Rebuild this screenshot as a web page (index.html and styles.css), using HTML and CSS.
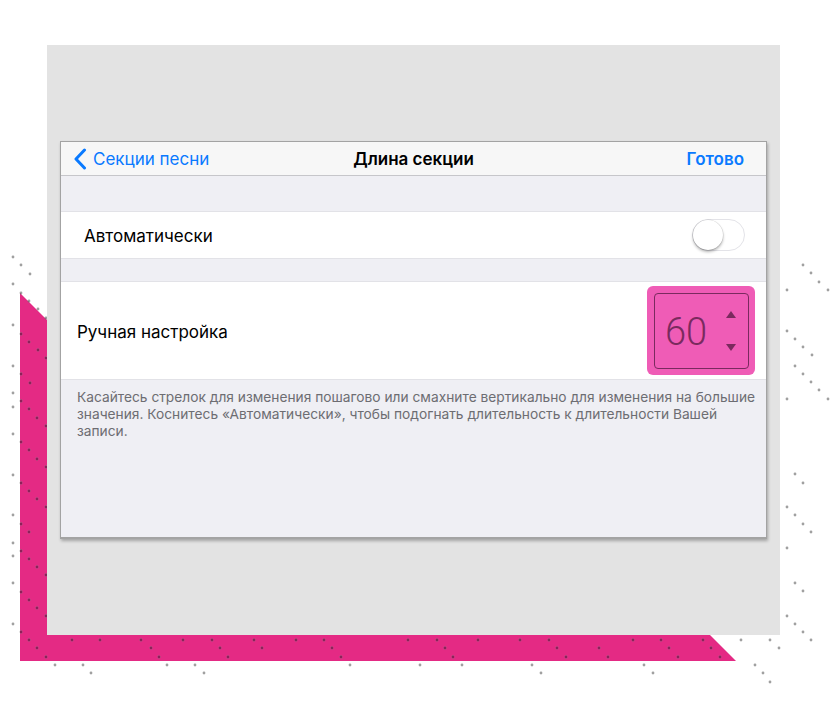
FILE: index.html
```html
<!DOCTYPE html>
<html lang="ru">
<head>
  <meta charset="UTF-8" />
  <title>Длина секции</title>
  <link rel="stylesheet" href="styles.css">
</head>
<body>
  <div class="stage">
    <!-- Pink corner frame with dotted texture behind the board -->
    <svg class="deco" width="840" height="710" viewBox="0 0 840 710">
      <defs>
        <clipPath id="frame-clip">
          <polygon points="20,293 47,320 47,600 710,635 736,661 20,661" />
        </clipPath>
        <g id="dots">
          <circle cx="13" cy="257" r="1.4"/><circle cx="21" cy="265" r="1.4"/><circle cx="30" cy="274" r="1.4"/>
          <circle cx="13" cy="284" r="1.4"/><circle cx="21" cy="293" r="1.4"/><circle cx="29" cy="301" r="1.4"/><circle cx="38" cy="309" r="1.4"/><circle cx="46" cy="318" r="1.4"/>
          <circle cx="13" cy="325" r="1.4"/><circle cx="21" cy="334" r="1.4"/><circle cx="29" cy="342" r="1.4"/><circle cx="38" cy="350" r="1.4"/><circle cx="46" cy="358" r="1.4"/>
          <circle cx="13" cy="366" r="1.4"/><circle cx="21" cy="374" r="1.4"/><circle cx="30" cy="383" r="1.4"/>
          <circle cx="13" cy="393" r="1.4"/><circle cx="21" cy="401" r="1.4"/><circle cx="29" cy="409" r="1.4"/><circle cx="37" cy="418" r="1.4"/><circle cx="46" cy="426" r="1.4"/>
          <circle cx="13" cy="407" r="1.4"/>
          <circle cx="13" cy="434" r="1.4"/><circle cx="21" cy="442" r="1.4"/><circle cx="29" cy="450" r="1.4"/><circle cx="37" cy="459" r="1.4"/><circle cx="46" cy="467" r="1.4"/>
          <circle cx="13" cy="475" r="1.4"/><circle cx="21" cy="483" r="1.4"/><circle cx="29" cy="491" r="1.4"/><circle cx="37" cy="499" r="1.4"/><circle cx="46" cy="507" r="1.4"/>
          <circle cx="13" cy="515" r="1.4"/><circle cx="21" cy="524" r="1.4"/><circle cx="29" cy="532" r="1.4"/>
          <circle cx="13" cy="543" r="1.4"/><circle cx="21" cy="551" r="1.4"/><circle cx="29" cy="559" r="1.4"/><circle cx="37" cy="567" r="1.4"/><circle cx="46" cy="575" r="1.4"/>
          <circle cx="13" cy="556" r="1.4"/>
          <circle cx="13" cy="583" r="1.4"/><circle cx="21" cy="592" r="1.4"/><circle cx="29" cy="600" r="1.4"/><circle cx="37" cy="608" r="1.4"/><circle cx="46" cy="616" r="1.4"/>
          <circle cx="13" cy="624" r="1.4"/><circle cx="21" cy="632" r="1.4"/><circle cx="29" cy="640" r="1.4"/><circle cx="37" cy="648" r="1.4"/><circle cx="46" cy="657" r="1.4"/><circle cx="55" cy="665" r="1.4"/>
          <!-- bottom band -->
          <circle cx="72" cy="640" r="1.4"/><circle cx="100" cy="640" r="1.4"/><circle cx="141" cy="640" r="1.4"/><circle cx="183" cy="640" r="1.4"/><circle cx="212" cy="640" r="1.4"/><circle cx="254" cy="640" r="1.4"/><circle cx="296" cy="640" r="1.4"/><circle cx="324" cy="640" r="1.4"/><circle cx="408" cy="640" r="1.4"/><circle cx="437" cy="640" r="1.4"/><circle cx="478" cy="640" r="1.4"/><circle cx="520" cy="640" r="1.4"/><circle cx="549" cy="640" r="1.4"/><circle cx="633" cy="640" r="1.4"/><circle cx="661" cy="640" r="1.4"/><circle cx="703" cy="640" r="1.4"/><circle cx="741" cy="640" r="1.4"/><circle cx="770" cy="640" r="1.4"/>
          <circle cx="151" cy="648" r="1.4"/><circle cx="220" cy="648" r="1.4"/><circle cx="262" cy="648" r="1.4"/><circle cx="332" cy="648" r="1.4"/><circle cx="445" cy="648" r="1.4"/><circle cx="557" cy="648" r="1.4"/><circle cx="599" cy="648" r="1.4"/><circle cx="669" cy="648" r="1.4"/><circle cx="711" cy="648" r="1.4"/><circle cx="779" cy="648" r="1.4"/>
          <circle cx="159" cy="657" r="1.4"/><circle cx="228" cy="657" r="1.4"/><circle cx="341" cy="657" r="1.4"/><circle cx="453" cy="657" r="1.4"/><circle cx="566" cy="657" r="1.4"/><circle cx="608" cy="657" r="1.4"/><circle cx="678" cy="657" r="1.4"/><circle cx="720" cy="657" r="1.4"/>
          <circle cx="83" cy="665" r="1.4"/><circle cx="167" cy="665" r="1.4"/><circle cx="195" cy="665" r="1.4"/><circle cx="350" cy="665" r="1.4"/><circle cx="420" cy="665" r="1.4"/><circle cx="462" cy="665" r="1.4"/><circle cx="532" cy="665" r="1.4"/><circle cx="644" cy="665" r="1.4"/><circle cx="755" cy="665" r="1.4"/>
          <circle cx="91" cy="673" r="1.4"/><circle cx="204" cy="673" r="1.4"/><circle cx="541" cy="673" r="1.4"/><circle cx="653" cy="673" r="1.4"/><circle cx="763" cy="673" r="1.4"/>
          <circle cx="770" cy="682" r="1.4"/>
          <!-- right side -->
          <circle cx="803" cy="265" r="1.4"/><circle cx="811" cy="273" r="1.4"/><circle cx="819" cy="282" r="1.4"/><circle cx="828" cy="290" r="1.4"/>
          <circle cx="787" cy="290" r="1.4"/>
          <circle cx="787" cy="331" r="1.4"/><circle cx="795" cy="339" r="1.4"/><circle cx="803" cy="347" r="1.4"/><circle cx="812" cy="355" r="1.4"/>
          <circle cx="795" cy="366" r="1.4"/><circle cx="803" cy="374" r="1.4"/><circle cx="811" cy="382" r="1.4"/><circle cx="819" cy="390" r="1.4"/><circle cx="828" cy="399" r="1.4"/>
          <circle cx="787" cy="399" r="1.4"/>
          <circle cx="795" cy="474" r="1.4"/><circle cx="803" cy="483" r="1.4"/>
          <circle cx="787" cy="507" r="1.4"/><circle cx="795" cy="515" r="1.4"/><circle cx="803" cy="524" r="1.4"/><circle cx="811" cy="532" r="1.4"/>
          <circle cx="787" cy="548" r="1.4"/>
          <circle cx="795" cy="583" r="1.4"/><circle cx="803" cy="591" r="1.4"/>
          <circle cx="787" cy="616" r="1.4"/><circle cx="795" cy="624" r="1.4"/><circle cx="803" cy="632" r="1.4"/><circle cx="811" cy="640" r="1.4"/>
        </g>
      </defs>
      <polygon class="frame" points="20,293 47,320 47,600 700,600 710,635 736,661 20,661" />
      <use href="#dots" fill="#a0a0a0" />
      <use href="#dots" fill="#8e1f5a" clip-path="url(#frame-clip)" />
    </svg>

    <div class="board">
      <div class="device">
        <div class="navbar">
          <div class="nav-back">
            <svg class="chevron" width="14" height="22" viewBox="0 0 14 22">
              <path d="M11.5 2 L3 11 L11.5 20" fill="none" stroke="#0a7aff" stroke-width="3" stroke-linecap="round" stroke-linejoin="round"/>
            </svg>
            <span>Секции песни</span>
          </div>
          <div class="nav-title">Длина секции</div>
          <div class="nav-done">Готово</div>
        </div>

        <div class="group-gap gap-top"></div>
        <div class="cell cell-auto">
          <span class="cell-label">Автоматически</span>
          <span class="switch"><span class="knob"></span></span>
        </div>

        <div class="group-gap gap-mid"></div>
        <div class="cell cell-manual">
          <span class="cell-label">Ручная настройка</span>
          <div class="stepper">
            <div class="stepper-box">
              <span class="stepper-value">60</span>
              <span class="stepper-arrows">
                <svg width="10" height="7" viewBox="0 0 10 7"><polygon points="5,0 10,7 0,7" fill="#7a2a5e"/></svg>
                <svg width="10" height="7" viewBox="0 0 10 7"><polygon points="0,0 10,0 5,7" fill="#7a2a5e"/></svg>
              </span>
            </div>
          </div>
        </div>

        <p class="footnote">Касайтесь стрелок для изменения пошагово или смахните вертикально для изменения на большие значения. Коснитесь «Автоматически», чтобы подогнать длительность к длительности Вашей записи.</p>
      </div>
    </div>
  </div>
</body>
</html>
```

FILE: styles.css
```css
/* ---------- Page ---------- */
html, body {
  margin: 0;
  padding: 0;
  background: #fff;
}
.stage {
  position: relative;
  width: 840px;
  height: 710px;
  overflow: hidden;
  font-family: Inter, "Liberation Sans", Arial, sans-serif;
}
/* Decorative frame layer sits under the board */
.deco {
  position: absolute;
  top: 0;
  left: 0;
  z-index: 0;
}
.frame {
  fill: #e42a84;
}

/* ---------- Grey board holding the device screen ---------- */
.board {
  position: relative;
  z-index: 1;
  box-sizing: border-box;
  width: 733px;
  height: 590px;
  margin: 45px 0 0 47px;
  padding: 96px 0 0 13px;
  background: #e3e3e3;
}
.device {
  box-sizing: border-box;
  width: 707px;
  height: 398px;
  border: 1px solid #a3a3a3;
  border-bottom-width: 2px;
  box-shadow: 1px 2px 3px rgba(0, 0, 0, 0.28);
  background: #efeff4;
  overflow: hidden;
  display: flex;
  flex-direction: column;
}

/* ---------- Navigation bar ---------- */
.navbar {
  flex: none;
  height: 33px;
  border-bottom: 1px solid #c6c6ca;
  background: #f7f7f7;
  display: grid;
  grid-template-columns: 1fr auto 1fr;
  align-items: center;
  font-size: 17px;
}
.nav-back {
  display: flex;
  align-items: center;
  gap: 6px;
  padding-left: 12px;
  color: #0a7aff;
}
.chevron {
  display: block;
}
.nav-title {
  font-weight: 600;
  color: #000;
}
.nav-done {
  justify-self: end;
  padding-right: 22px;
  font-weight: 600;
  color: #0a7aff;
}

/* ---------- Table ---------- */
.group-gap {
  flex: none;
}
.gap-top {
  height: 35px;
}
.gap-mid {
  height: 22px;
}
.cell {
  flex: none;
  display: flex;
  align-items: center;
  justify-content: space-between;
  background: #fff;
  border-top: 1px solid #e2e2e7;
  border-bottom: 1px solid #e2e2e7;
  font-size: 17px;
  color: #000;
}
.cell-label {
  margin-top: 2px;
}
.cell-auto {
  height: 46px;
  padding: 0 21px 0 23px;
}
.cell-manual {
  height: 97px;
  padding: 0 11px 0 16px;
}

/* iOS style switch, off state */
.switch {
  box-sizing: border-box;
  width: 53px;
  height: 32px;
  border: 1.5px solid #e3e3e8;
  border-radius: 16px;
  background: #fff;
  position: relative;
}
.knob {
  position: absolute;
  top: -0.5px;
  left: -0.5px;
  width: 30px;
  height: 30px;
  border-radius: 50%;
  background: #fff;
  box-shadow: 0 2px 3px rgba(0, 0, 0, 0.3), 0 0 0 0.5px rgba(0, 0, 0, 0.12);
}

/* Highlighted stepper */
.stepper {
  box-sizing: border-box;
  width: 108px;
  height: 89px;
  padding: 7px 6px 6px 7px;
  border-radius: 6px;
  background: #ef5cb6;
}
.stepper-box {
  box-sizing: border-box;
  height: 100%;
  border: 1.5px solid #7a2a5e;
  border-radius: 4px;
  display: flex;
  align-items: center;
  justify-content: space-between;
  padding: 0 12px 0 10px;
}
.stepper-value {
  font-family: Roboto, "Liberation Sans", sans-serif;
  font-weight: 300;
  font-size: 38px;
  color: #7a2a5e;
  margin-top: 1px;
}
.stepper-arrows {
  display: flex;
  flex-direction: column;
  justify-content: space-between;
  height: 40px;
}
.stepper-arrows svg {
  display: block;
}

/* Explanation under the group */
.footnote {
  margin: 0;
  padding: 9px 6px 0 16px;
  font-size: 13.75px;
  line-height: 17px;
  color: #6d6d72;
}
```
